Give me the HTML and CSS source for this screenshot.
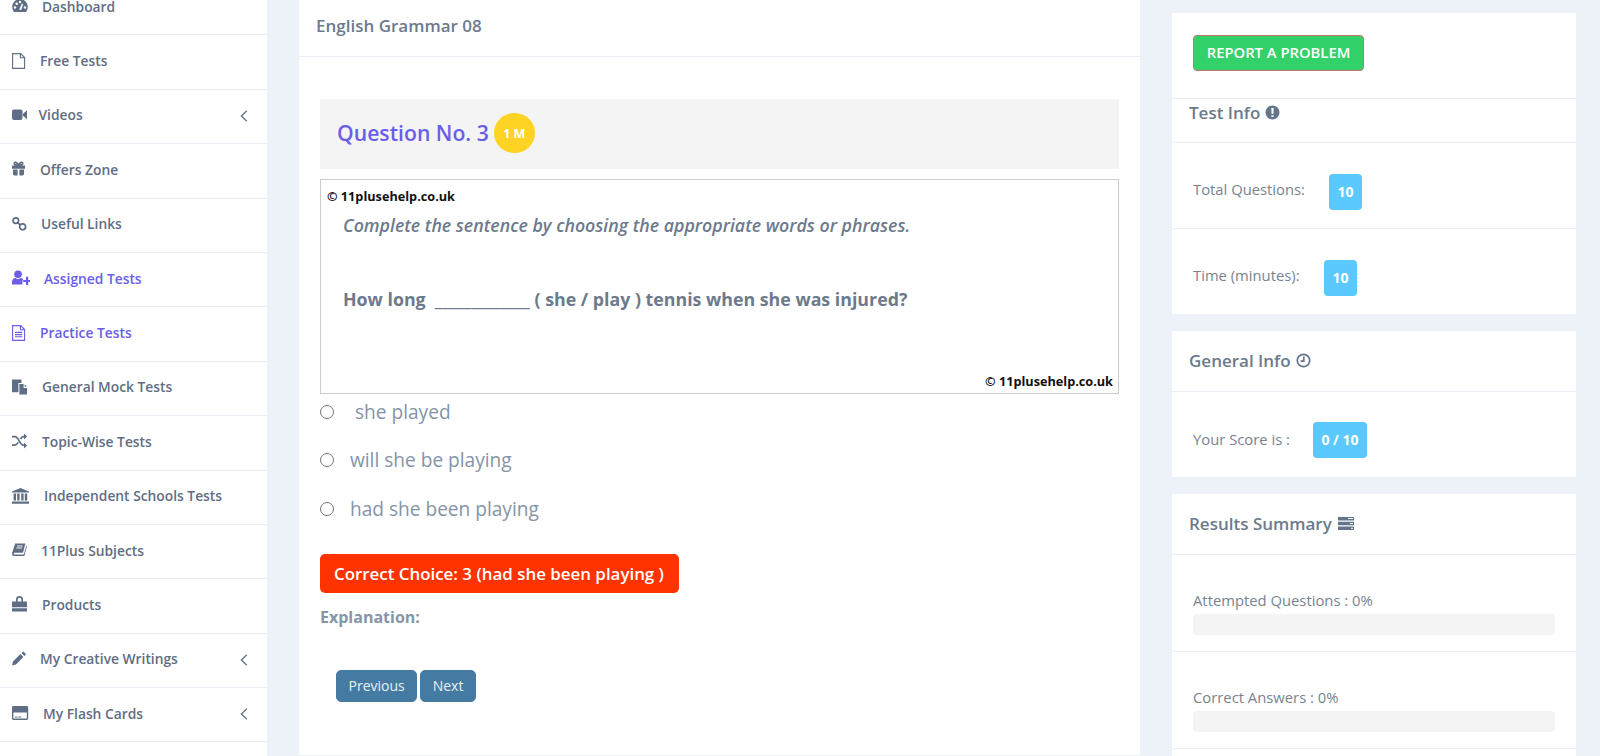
FILE: index.html
```html
<!DOCTYPE html>
<html lang="en">
<head>
<meta charset="UTF-8" />
<meta name="viewport" content="width=device-width, initial-scale=1" />
<title>English Grammar 08</title>
<link rel="stylesheet" href="styles.css">
</head>
<body>

<nav class="sidebar">
  <a class="nav-item" href="#">
    <svg class="nav-icon" width="19" height="16" viewBox="0 0 19 16"><path d="M2.100 14a7.800 7.800 0 1 1 11.800 0z"/><g fill="#fff"><circle cx="3" cy="9.500" r="1.200"/><circle cx="4.700" cy="5.800" r="1.200"/><circle cx="8" cy="4" r="1.200"/><circle cx="13" cy="9.500" r="1.200"/></g><path d="M7.200 11.500l2.800-6 1.200.5-2 6z" fill="#fff"/></svg>
    Dashboard
  </a>
  <a class="nav-item" href="#">
    <svg class="nav-icon" width="17" height="16" viewBox="0 0 17 16"><path class="line" d="M.6.600h8l4 4v10.800H.6zM8.400.600v4.200h4.200"/></svg>
    Free Tests
  </a>
  <a class="nav-item" href="#">
    <svg class="nav-icon" width="15.500" height="16" viewBox="0 0 15.500 16"><rect x="0" y="2.500" width="10.500" height="10.500" rx="2"/><path d="M11 6.800l4-3.600v9.100l-4-3.600z"/></svg>
    Videos
    <svg class="chevron" width="8" height="12" viewBox="0 0 8 12"><path d="M6.800.800L1.400 6l5.400 5.200"/></svg>
  </a>
  <a class="nav-item" href="#">
    <svg class="nav-icon" width="17" height="16" viewBox="0 0 17 16"><path d="M0 4.500h13v3.200H0zM1 8.500h4.600V14.500H2.400A1.400 1.400 0 0 1 1 13.100zM7.400 8.500H12v4.600a1.400 1.400 0 0 1-1.400 1.400H7.400z"/><path class="line thick" d="M6.200 4.200C3 4.200 2 3.400 2.400 2.200 3 .8 5.600 1.400 6.200 4.200zM6.800 4.200c3.200 0 4.200-.8 3.800-2-.6-1.400-3.200-.8-3.800 2z"/></svg>
    Offers Zone
  </a>
  <a class="nav-item" href="#">
    <svg class="nav-icon" width="18" height="16" viewBox="0 0 18 16"><g class="line thick"><circle cx="3.800" cy="4.600" r="2.800"/><circle cx="10.600" cy="10.800" r="3"/><path d="M5.400 6.800l3.200 2.200"/></g></svg>
    Useful Links
  </a>
  <a class="nav-item active" href="#">
    <svg class="nav-icon" width="21" height="16" viewBox="0 0 21 16"><circle cx="6" cy="4.200" r="3.800"/><path d="M0 14.500v-2.700C0 9.600 1.600 8 3.400 8c1.600 1.200 3.600 1.200 5.200 0 1 0 1.800.4 2.400 1v1.600h-.6v3.900z"/><path d="M14 6.800h2.200v3.200H18v2.100h-1.800v3h-2.200v-3h-2.800V10H14z"/></svg>
    Assigned Tests
  </a>
  <a class="nav-item active" href="#">
    <svg class="nav-icon" width="17" height="16" viewBox="0 0 17 16"><path class="line" d="M.6.600h8l4 4v10.800H.6zM8.400.600v4.200h4.200M3 7.400h7.200M3 9.600h7.200M3 11.800h7.200"/></svg>
    Practice Tests
  </a>
  <a class="nav-item" href="#">
    <svg class="nav-icon" width="19" height="16" viewBox="0 0 19 16"><path d="M0 .5h9.500v3.400H6.400v9.400H0z"/><path d="M7.400 5h4.200v4H15v6.500H7.400z"/><path d="M12.600 5.200L15 7.800h-2.400z"/></svg>
    General Mock Tests
  </a>
  <a class="nav-item" href="#">
    <svg class="nav-icon" width="19" height="16" viewBox="0 0 19 16"><path class="line thick" d="M0 3.600h3c3.600 0 4.600 8.600 8.400 8.600h1.400M0 12.200h3c1.400 0 2.400-1.400 3.200-2.800M8.400 6c.8-1.400 1.800-2.400 3-2.400h1.400"/><path d="M12 .6l3.200 3-3.200 3zM12 9.400l3.200 3-3.200 3z"/></svg>
    Topic-Wise Tests
  </a>
  <a class="nav-item" href="#">
    <svg class="nav-icon" width="21" height="16" viewBox="0 0 21 16"><path d="M8.500 0l8.500 3.400v1.200H0V3.400zM0 13.500h17v2.300H0zM1.600 5.500h2.400v7H1.600zM5.200 5.500h2.400v7H5.200zM9.200 5.500h2.400v7H9.200zM12.800 5.500h2.400v7h-2.400z"/></svg>
    Independent Schools Tests
  </a>
  <a class="nav-item" href="#">
    <svg class="nav-icon" width="18" height="16" viewBox="0 0 18 16"><path d="M3.200 1.400h10.200l-2.400 9.400H2.600c-.8 0-1 1.600-.2 1.600h9.400l2.600-9 .6.600-2.600 10H2C.4 14-.2 12.200.2 10.600z"/><path d="M5 4h5.600M4.400 6h5.600" stroke="#fff" stroke-width=".9"/></svg>
    11Plus Subjects
  </a>
  <a class="nav-item" href="#">
    <svg class="nav-icon" width="19" height="16" viewBox="0 0 19 16"><path d="M0 5.600h15v5.600H0zM0 12.200h15v3.200H0z"/><path class="line thick" d="M4.800 7.500V3.600a2.700 2.700 0 0 1 5.400 0v3.900"/></svg>
    Products
  </a>
  <a class="nav-item" href="#">
    <svg class="nav-icon" width="17" height="16" viewBox="0 0 17 16"><path d="M0 14.500l1-4 7.400-7.400 3 3L4 13.500zM9.400 2.100l1-1c.5-.5 1.100-.5 1.600 0l1.400 1.400c.5.5.5 1.100 0 1.600l-1 1z"/></svg>
    My Creative Writings
    <svg class="chevron" width="8" height="12" viewBox="0 0 8 12"><path d="M6.800.800L1.400 6l5.400 5.200"/></svg>
  </a>
  <a class="nav-item" href="#">
    <svg class="nav-icon" width="20" height="16" viewBox="0 0 20 16"><path fill-rule="evenodd" d="M1.400 1h13.400c.8 0 1.400.6 1.400 1.400v11.200c0 .8-.6 1.400-1.400 1.400H1.400C.6 15 0 14.400 0 13.600V2.400C0 1.600.6 1 1.400 1zM1.400 7.400v6.200h13.400V7.400zM3 11.400h2.400v1H3zM6.200 11.400h3v1h-3z"/></svg>
    My Flash Cards
    <svg class="chevron" width="8" height="12" viewBox="0 0 8 12"><path d="M6.800.800L1.400 6l5.400 5.200"/></svg>
  </a>
</nav>

<main class="test-card">
  <h1 class="test-title">English Grammar 08</h1>
  <div class="test-body">
    <div class="question-head">
      <h2>Question No. 3</h2>
      <span class="marks">1 M</span>
    </div>
    <div class="question-box">
      <p class="mark-left">© 11plusehelp.co.uk</p>
      <p class="instruction">Complete the sentence by choosing the appropriate words or phrases.</p>
      <p class="sentence">How long &nbsp;_____________ ( she / play ) tennis when she was injured?</p>
      <p class="mark-right">© 11plusehelp.co.uk</p>
    </div>
    <label class="option first"><input type="radio" name="answer" /><span>she played</span></label>
    <label class="option"><input type="radio" name="answer" /><span>will she be playing</span></label>
    <label class="option"><input type="radio" name="answer" /><span>had she been playing</span></label>
    <div class="correct">Correct Choice: 3 (had she been playing )</div>
    <p class="explanation">Explanation:</p>
    <div class="pager">
      <button type="button">Previous</button>
      <button type="button">Next</button>
    </div>
  </div>
</main>

<aside class="side">
  <section class="panel">
    <div class="report-row"><button type="button" class="report">REPORT A PROBLEM</button></div>
    <h3 class="panel-title info-title">Test Info
      <svg class="title-icon" width="15" height="15" viewBox="0 0 15 15"><path fill-rule="evenodd" d="M7.500.5a7 7 0 1 1 0 14 7 7 0 0 1 0-14zM6.300 3l.3 6h1.800l.3-6zM6.400 10.200v1.900h2.200v-1.900z"/></svg>
    </h3>
    <div class="stat-row first-stat"><span class="stat-label q-label">Total Questions:</span><span class="stat-badge">10</span></div>
    <div class="stat-row last-stat"><span class="stat-label t-label">Time (minutes):</span><span class="stat-badge">10</span></div>
  </section>

  <section class="panel">
    <h3 class="panel-title">General Info
      <svg class="title-icon" width="15" height="15" viewBox="0 0 15 15"><circle class="ring" cx="7.500" cy="7.500" r="6.200"/><path class="ring" d="M7.800 3.500v4.600H4.600"/></svg>
    </h3>
    <div class="stat-row score-row"><span class="stat-label s-label">Your Score is :</span><span class="stat-badge wide">0 / 10</span></div>
  </section>

  <section class="panel panel-last">
    <h3 class="panel-title">Results Summary
      <svg class="title-icon" width="18" height="15" viewBox="0 0 18 15"><path d="M1 1h16v3.400H1zM1 5.800h16v3.400H1zM1 10.600h16V14H1z"/><path fill="#fff" d="M11 2h5v1h-5zM13 6.900h3v1h-3zM14 11.700h2v1h-2z"/></svg>
    </h3>
    <div class="progress-row">
      <span class="stat-label">Attempted Questions : 0%</span>
      <div class="progress"></div>
    </div>
    <div class="progress-row">
      <span class="stat-label">Correct Answers : 0%</span>
      <div class="progress"></div>
    </div>
  </section>
</aside>

</body>
</html>
```

FILE: styles.css
```css
* {
  box-sizing: border-box;
}
html, body {
  height: 756px;
  overflow: hidden;
}
body {
  margin: 0;
  display: flex;
  align-items: flex-start;
  background: #edf1f8;
  color: #6c7a8c;
  font-family: "Open Sans", sans-serif;
}
p, h1, h2, h3 {
  margin: 0;
}

/* menu lateral */
.sidebar {
  width: 267px;
  height: 775px;
  margin-top: -19px;
  flex-shrink: 0;
  background: #fff;
}
.nav-item {
  display: flex;
  align-items: center;
  height: 54.4px;
  padding: 0 19px 3px 12px;
  border-bottom: 1px solid #e9edf4;
  color: #5f6e84;
  font-size: 13.8px;
  font-weight: 600;
  text-decoration: none;
}
.nav-item.active {
  color: #6a5ee8;
}
.nav-icon {
  margin-right: 11px;
  fill: currentColor;
  flex-shrink: 0;
}
.line {
  fill: none;
  stroke: currentColor;
  stroke-width: 1.1;
}
.line.thick {
  stroke-width: 1.7;
}
.chevron {
  margin: 2px 0 0 auto;
  fill: none;
  stroke: #5f6e84;
  stroke-width: 1.3;
}

/* tarjeta central */
.test-card {
  width: 841px;
  height: 755px;
  margin-left: 32px;
  flex-shrink: 0;
  background: #fff;
}
.test-title {
  height: 57px;
  padding: 15px 17px 0;
  border-bottom: 1px solid #e9edf4;
  font-size: 17px;
  line-height: 22px;
  font-weight: 600;
  color: #6c7a8c;
}
.test-body {
  padding: 42px 21px 0;
}
.question-head {
  display: flex;
  align-items: center;
  height: 70px;
  padding-left: 17px;
  background: #f4f4f4;
}
.question-head h2 {
  margin-bottom: 4px;
  font-size: 21.2px;
  font-weight: 600;
  color: #6a5ee8;
}
.marks {
  display: flex;
  align-items: center;
  justify-content: center;
  width: 41px;
  height: 40px;
  margin: 0 0 2px 5px;
  border-radius: 50%;
  background: #ffd323;
  color: #fff;
  font-size: 12.5px;
  font-weight: 700;
}
.question-box {
  display: flex;
  flex-direction: column;
  height: 215px;
  margin-top: 10px;
  padding: 7px 5px 3px 6px;
  border: 1px solid #ccc;
}
.mark-left, .mark-right {
  color: #111;
  font-size: 12.7px;
  line-height: 18px;
  font-weight: 700;
}
.mark-right {
  margin-top: auto;
  text-align: right;
}
.instruction {
  margin: 8px 0 0 16px;
  font-size: 17.75px;
  line-height: 24px;
  font-style: italic;
  font-weight: 600;
}
.sentence {
  margin: 50px 0 0 16px;
  font-size: 17.8px;
  line-height: 24px;
  font-weight: 700;
}
.option {
  display: flex;
  align-items: center;
  height: 48.3px;
  font-size: 19.1px;
  color: #8494a8;
}
.option.first {
  margin-top: -6px;
}
.option input {
  width: 14px;
  height: 14px;
  margin: 0 16px 0 0;
}
.option.first span {
  padding-left: 5px;
}
.correct {
  width: 359px;
  height: 39px;
  margin-top: 21px;
  padding-left: 14px;
  border-radius: 5px;
  background: #ff3300;
  color: #fff;
  font-size: 16.9px;
  line-height: 39px;
  font-weight: 600;
}
.explanation {
  margin-top: 13px;
  color: #8496a8;
  font-size: 16px;
  line-height: 22px;
  font-weight: 700;
}
.pager {
  display: flex;
  gap: 3px;
  margin: 42px 0 0 16px;
}
.pager button {
  height: 32px;
  padding: 0 11.5px;
  border: 1px solid #457ba3;
  border-radius: 5px;
  background: #457ba3;
  color: #e8f0f6;
  font-family: inherit;
  font-size: 14px;
}

/* columna derecha */
.side {
  width: 404px;
  margin: 13px 0 0 32px;
  flex-shrink: 0;
}
.panel {
  margin-bottom: 17px;
  background: #fff;
}
.panel-last {
  height: 263px;
  margin-bottom: 0;
  overflow: hidden;
}
.report-row {
  height: 86px;
  padding: 22px 21px 0;
  border-bottom: 1px solid #e9edf4;
}
.report {
  width: 171px;
  height: 36px;
  padding: 0 0 3px;
  border: 1px solid #c97468;
  border-radius: 4px;
  background: #33d16a;
  color: #fff;
  font-family: inherit;
  font-size: 14.8px;
  font-weight: 600;
}
.panel-title {
  display: flex;
  align-items: center;
  gap: 5px;
  height: 61px;
  padding: 0 17px 2px;
  border-bottom: 1px solid #e9edf4;
  font-size: 17px;
  font-weight: 600;
  color: #6c7a8c;
}
.info-title {
  height: 44px;
  padding-bottom: 17px;
}
.title-icon {
  fill: #64748b;
  flex-shrink: 0;
}
.ring {
  fill: none;
  stroke: #64748b;
  stroke-width: 1.7;
}
.stat-row {
  display: flex;
  align-items: center;
  padding-left: 21px;
}
.first-stat {
  height: 86px;
  padding-top: 9px;
  border-bottom: 1px solid #e9edf4;
}
.last-stat {
  height: 85px;
  padding-top: 9px;
}
.score-row {
  height: 85px;
  padding-top: 10px;
}
.stat-label {
  font-size: 14.8px;
  color: #78838f;
  margin-top: -2px;
}
.q-label { width: 136px; }
.t-label { width: 131px; }
.s-label { width: 120px; }
.stat-badge {
  display: flex;
  align-items: center;
  justify-content: center;
  width: 33px;
  height: 36px;
  margin-top: 3px;
  border-radius: 4px;
  background: #5bc8ff;
  color: #fff;
  font-size: 14px;
  font-weight: 700;
}
.stat-badge.wide {
  width: 54px;
  margin-top: 0;
}
.progress-row {
  height: 97px;
  padding: 36px 21px 0;
  border-bottom: 1px solid #e9edf4;
}
.progress-row .stat-label {
  display: block;
  margin-top: -1px;
  line-height: 20px;
}
.progress {
  height: 21px;
  margin-top: 4px;
  border-radius: 4px;
  background: #f4f4f4;
}
```
